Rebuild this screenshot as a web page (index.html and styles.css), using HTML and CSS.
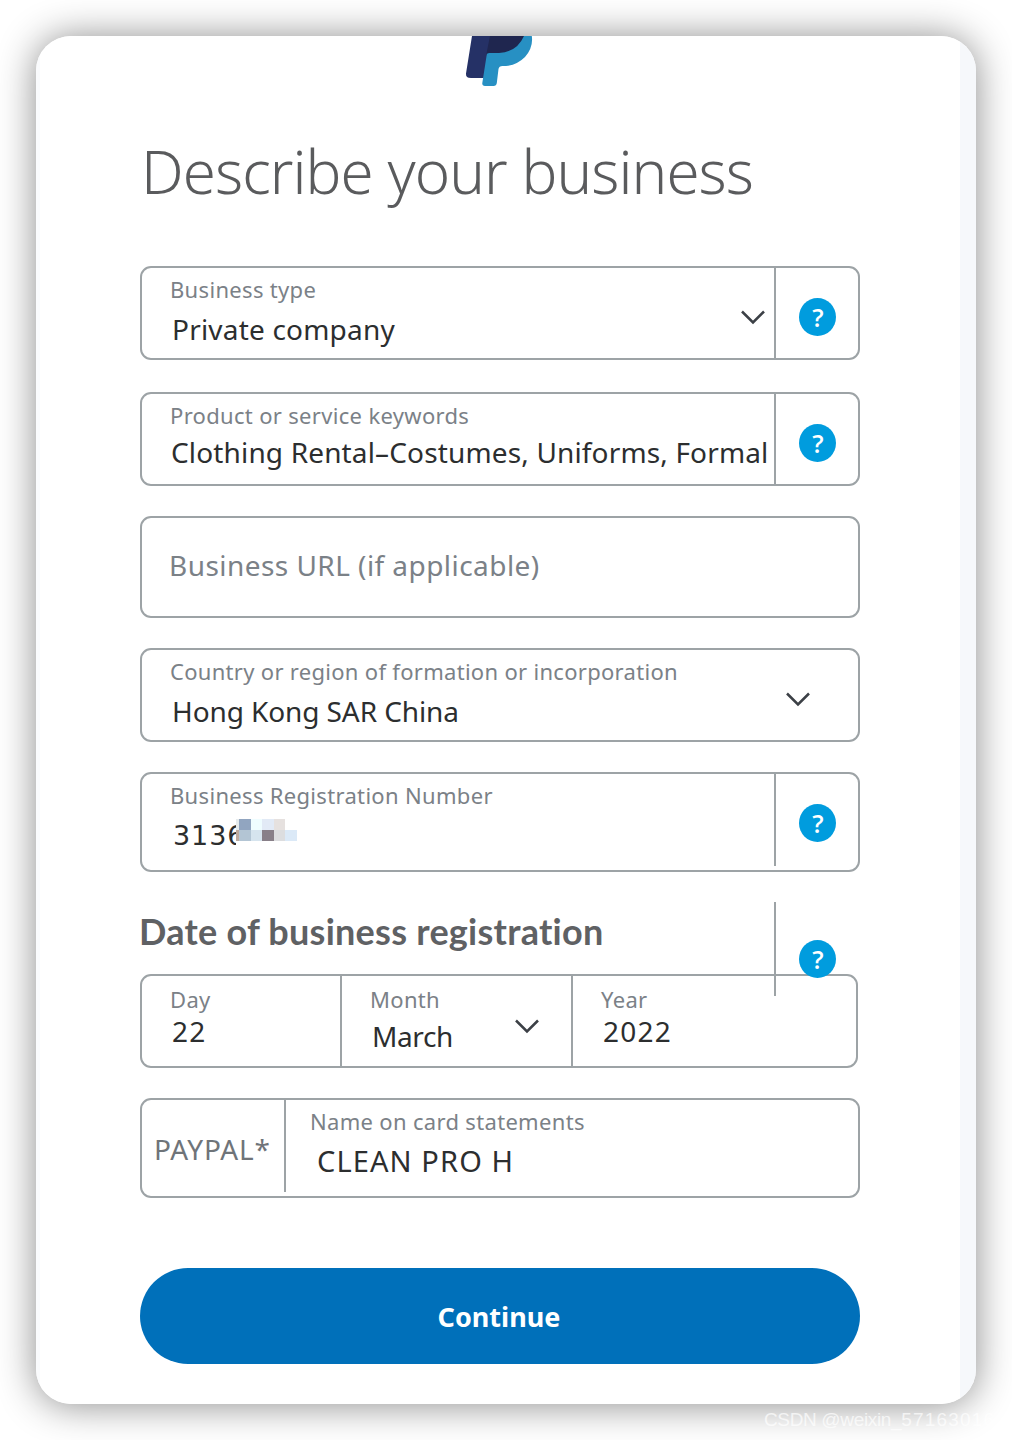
FILE: index.html
```html
<!DOCTYPE html>
<html lang="en">
<head>
<meta charset="utf-8">
<title>Describe your business</title>
<link rel="stylesheet" href="styles.css">
</head>
<body>
<main class="card">
  <svg class="logo" viewBox="0 0 80 52" width="80" height="52" aria-label="PayPal">
    <path fill="#253166" d="M16 0H45L36 20L29 42H15Q9.500 42 10 37.500Z"/>
    <path fill="#2790c3" d="M61 0H75.800Q77.500 11 69 21Q61 29 50 30H46.500Q43 30 42.500 33L40.800 47Q40.400 50 37.500 50H29Q26 50 26.300 47L31 17Z"/>
    <path fill="#1f264f" d="M34 0H68Q61 16 43 17H33.500Q30.500 17 30 20Z"/>
  </svg>
  <h1 class="title">Describe your business</h1>
  <form class="form">
    <div class="field">
      <div class="main">
        <label class="label">Business type</label>
        <div class="value private">Private company</div>
      </div>
      <svg class="chevron" viewBox="0 0 26 16"><path d="M2 2.500L13 13.500L24 2.500"/></svg>
      <div class="help"><span class="dot">?</span></div>
    </div>
    <div class="field keywords">
      <div class="main">
        <label class="label">Product or service keywords</label>
        <div class="value">Clothing Rental–Costumes, Uniforms, Formal</div>
      </div>
      <div class="help"><span class="dot">?</span></div>
    </div>
    <div class="field url"><div class="placeholder">Business URL (if applicable)</div></div>
    <div class="field country">
      <div class="main">
        <label class="label">Country or region of formation or incorporation</label>
        <div class="value">Hong Kong SAR China</div>
      </div>
      <svg class="chevron" viewBox="0 0 26 16"><path d="M2 2.500L13 13.500L24 2.500"/></svg>
    </div>
    <div class="field number">
      <div class="main">
        <label class="label">Business Registration Number</label>
        <div class="value digits">3136<span class="mosaic"><i class="m1"></i><i class="m2"></i><i class="m3"></i><i class="m4"></i><i class="m5"></i><i class="m6"></i><i class="m7"></i><i class="m8"></i><i class="m9"></i><i class="m10"></i></span></div>
      </div>
      <div class="help short"><span class="dot">?</span></div>
    </div>
    <section class="date">
      <h2 class="subtitle">Date of business registration</h2>
      <div class="field parts">
        <div class="main day"><label class="label">Day</label><div class="value year-value">22</div></div>
        <div class="main month"><label class="label">Month</label><div class="value">March</div></div>
        <svg class="chevron" viewBox="0 0 26 16"><path d="M2 2.500L13 13.500L24 2.500"/></svg>
        <div class="main year"><label class="label">Year</label><div class="value year-value">2022</div></div>
      </div>
      <div class="help floating"><span class="dot">?</span></div>
    </section>
    <div class="field statement">
      <div class="prefix">PAYPAL*</div>
      <div class="main">
        <label class="label">Name on card statements</label>
        <div class="value">CLEAN PRO H</div>
      </div>
    </div>
    <button class="continue" type="button">Continue</button>
  </form>
</main>
<div class="watermark">CSDN @weixin_<span class="uid">57163016</span></div>
</body>
</html>
```
FILE: styles.css
```css
* { box-sizing: border-box; }

body {
  margin: 0;
  height: 1440px;
  padding: 36px;
  position: relative;
  overflow: hidden;
  background: #fff;
  font-family: "Noto Sans", sans-serif;
  color: #2c2e2f;
}

.card {
  width: 940px;
  height: 1368px;
  padding: 0 116px 0 104px;
  border-radius: 35px;
  background: linear-gradient(90deg, #fafbfd 4px, #fff 4px, #fff 924px, #f6f8fb 924px);
  box-shadow: 0 1px 38px rgba(0, 0, 0, .46);
}

.logo {
  display: block;
  margin-left: 316px;
}

.title {
  margin: 42px 0 0 1px;
  font-size: 60px;
  font-weight: 300;
  line-height: 82px;
  letter-spacing: -.92px;
  white-space: nowrap;
  color: #5a5b5d;
}

.form {
  display: flex;
  flex-direction: column;
  margin-top: 54px;
}

.field {
  display: flex;
  height: 94px;
  border: 2px solid #9da3a6;
  border-radius: 11px;
}

.main {
  flex: 1;
  min-width: 0;
  padding: 7px 0 0 28px;
  white-space: nowrap;
}

.label {
  display: block;
  font-size: 22px;
  line-height: 28px;
  letter-spacing: .32px;
  color: #7b8187;
}

.value {
  margin-top: 8px;
  padding-left: 2px;
  font-size: 28px;
  line-height: 36px;
}

.private { letter-spacing: .2px; }

.chevron {
  width: 26px;
  height: 16px;
  margin: 41px 8px 0 0;
  fill: none;
  stroke: #3c4046;
  stroke-width: 2.5;
}

.help {
  display: flex;
  align-items: center;
  width: 84px;
  padding: 7px 0 0 23px;
  border-left: 2px solid #9da3a6;
}

.help, .dot { flex: none; }

.dot {
  width: 37px;
  height: 38px;
  border-radius: 50%;
  background: #009cde;
  color: #fff;
  font: 600 25px/38px "Open Sans", sans-serif;
  text-align: center;
  padding-left: 1px;
}

.keywords { margin-top: 32px; }
.keywords .value {
  margin-top: 5px;
  padding-left: 1px;
  letter-spacing: .15px;
}

.url {
  height: 102px;
  margin-top: 30px;
  padding: 27px 0 0 27px;
}

.placeholder {
  font-size: 28px;
  line-height: 40px;
  letter-spacing: .45px;
  color: #7b8187;
}

.country { margin-top: 30px; }
.country .label { letter-spacing: .3px; }
.country .value { letter-spacing: -.1px; }
.country .chevron { margin-right: 47px; }

.number {
  height: 100px;
  margin-top: 30px;
}

.digits {
  display: flex;
  align-items: center;
  margin-top: 9px;
  padding-left: 3px;
  font-family: "DejaVu Sans", sans-serif;
  letter-spacing: .9px;
  font-size: 27px;
}

.mosaic {
  display: grid;
  grid-template-columns: 3px 12px 11px 12px 11px 12px;
  grid-template-rows: 11px 11px 7px;
  grid-auto-flow: column;
  position: relative;
  left: -9px;
  top: -3px;
  background: #fff;
}

.mosaic i { grid-row: 1; }
.mosaic i:nth-child(even) { grid-row: 2; }
.m1, .m2 { grid-column: 1; }
.m3, .m4 { grid-column: 2; }
.m5, .m6 { grid-column: 3; }
.m7, .m8 { grid-column: 4; }
.m9, .m10 { grid-column: 5; }
.m1 { background: #e6ebec; }
.m2 { background: #bda99d; }
.m3 { background: #91a5c0; }
.m4 { background: #b3c5d4; }
.m5 { background: #effdff; }
.m6 { background: #d6e4ee; }
.m7 { background: #e2eaf6; }
.m8 { background: #887f88; }
.m9 { background: #e6e1df; }
.m10 { background: #dcdddf; }
.mosaic::after { content: ""; grid-row: 2; grid-column: 6; background: #dbe9f7; }

.short {
  height: 92px;
  padding-top: 6px;
}
.number .dot { margin-top: 0; }

.date {
  position: relative;
  margin-top: 35px;
}

.subtitle {
  margin: 0 0 0 -1px;
  font: 700 36px/48px Lato, sans-serif;
  font-variant-ligatures: none;
  letter-spacing: .25px;
  white-space: nowrap;
  color: #5f6164;
}

.parts {
  width: 718px;
  margin-top: 19px;
}

.parts .main { padding-top: 9px; }
.parts .value { margin-top: 5px; }
.parts .year-value { margin-top: 0; letter-spacing: 1.2px; }
.parts .day { flex: 0 0 198px; }
.parts .month { flex: 0 0 174px; border-left: 2px solid #9da3a6; }
.parts .month .value { letter-spacing: -.4px; }
.parts .year { border-left: 2px solid #9da3a6; }
.parts .chevron { flex: none; margin: 42px 31px 0 1px; width: 26px; }
.parts .month { margin-right: -1px; padding-right: 0; }

.floating {
  position: absolute;
  left: 634px;
  top: -5px;
  height: 94px;
  padding-top: 20px;
}

.statement {
  height: 100px;
  margin-top: 30px;
}

.prefix {
  width: 142px;
  padding-left: 12px;
  font-size: 28px;
  line-height: 98px;
  letter-spacing: .8px;
  color: #6f7479;
}

.statement .main {
  height: 92px;
  padding-top: 7px;
  padding-left: 24px;
  border-left: 2px solid #9da3a6;
}

.statement .value {
  margin-top: 8px;
  padding-left: 7px;
  font-size: 29px;
  letter-spacing: 1.1px;
}

.continue {
  height: 96px;
  margin-top: 70px;
  padding: 1px 2px 0 0;
  border: 0;
  border-radius: 48px;
  background: #0070ba;
  color: #fff;
  font: 700 27px/40px "Noto Sans", sans-serif;
}

.watermark {
  position: absolute;
  left: 764px;
  top: 1408px;
  font: 19px/24px "Liberation Sans", sans-serif;
  letter-spacing: -.35px;
  white-space: nowrap;
  color: rgba(255, 255, 255, .7);
}

.uid { letter-spacing: 1.2px; }
```
